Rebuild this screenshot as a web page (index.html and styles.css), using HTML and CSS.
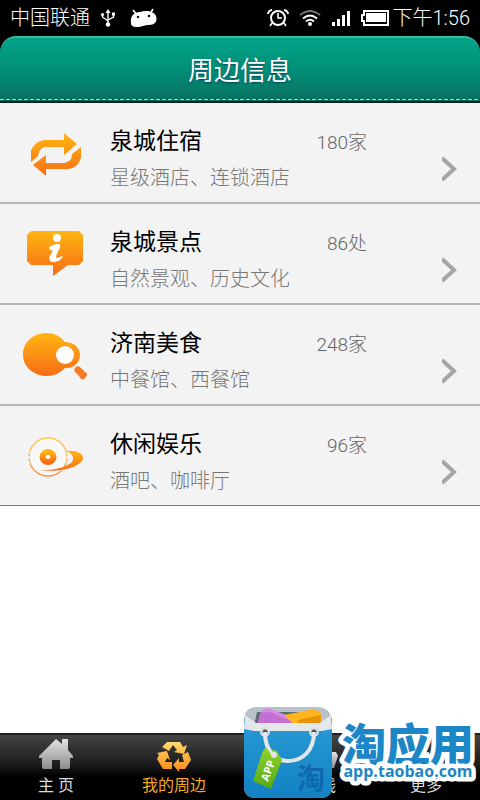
FILE: index.html
```html
<!DOCTYPE html>
<html lang="zh-CN">

<head>
    <meta charset="UTF-8">
    <meta name="viewport" content="width=device-width, initial-scale=1.0">
    <title>周边信息</title>
    <link rel="stylesheet" href="styles.css">
</head>

<body>
    <!-- 渐变 -->
    <svg class="defs" width="0" height="0" aria-hidden="true">
        <defs>
            <linearGradient id="orange" x1="0" y1="0" x2="0" y2="1">
                <stop offset="0" stop-color="#ffb612" />
                <stop offset="1" stop-color="#f86c16" />
            </linearGradient>
            <linearGradient id="arrows" gradientUnits="userSpaceOnUse" x1="0" y1="12" x2="0" y2="56">
                <stop offset="0" stop-color="#ffb612" />
                <stop offset="1" stop-color="#f86c16" />
            </linearGradient>
            <linearGradient id="silver" x1="0" y1="0" x2="0" y2="1">
                <stop offset="0" stop-color="#e2e2e2" />
                <stop offset="1" stop-color="#8c8c8c" />
            </linearGradient>
            <linearGradient id="gold" gradientUnits="userSpaceOnUse" x1="0" y1="2" x2="0" y2="34">
                <stop offset="0" stop-color="#ffe070" />
                <stop offset="1" stop-color="#f98a18" />
            </linearGradient>
            <linearGradient id="blue" x1="0" y1="0" x2="0" y2="1">
                <stop offset="0" stop-color="#299bd5" />
                <stop offset="1" stop-color="#1381c2" />
            </linearGradient>
            <linearGradient id="green" x1="0" y1="0" x2="0" y2="1">
                <stop offset="0" stop-color="#8ed12c" />
                <stop offset="1" stop-color="#57a916" />
            </linearGradient>
        </defs>
    </svg>

    <!-- 状态栏 -->
    <div class="status">
        <span class="carrier">中国联通</span>
        <svg class="usb" width="16" height="18" viewBox="0 0 16 18" fill="none" stroke="#fff" stroke-width="1.4">
            <path d="M8 3V15M2.500 6V8L8 12M13.500 5V8L8 11" />
            <path d="M8 0L10.500 4H5.500Z" fill="#fff" stroke="none" />
            <circle cx="2.500" cy="5.500" r="1.600" fill="#fff" stroke="none" />
            <path d="M12 3.500H15V6.500H12Z" fill="#fff" stroke="none" />
            <circle cx="8" cy="15.500" r="2.200" fill="#fff" stroke="none" />
        </svg>
        <svg class="droid" width="28" height="20" viewBox="0 0 28 20">
            <path d="M3 2L7 7M23 1L20 6" stroke="#fff" stroke-width="1.600" />
            <path d="M1 15C0 8 4 4 10 4C16 2 24 3 26 8C28 14 24 17 19 17C14 17 12 19 7 19C3 19 1 18 1 15Z" fill="#fff" />
            <circle cx="8" cy="9" r="1.200" />
            <circle cx="19" cy="8" r="1.200" />
        </svg>
        <div class="signals">
            <svg width="22" height="18" viewBox="0 0 22 18" fill="none" stroke="#fff" stroke-width="2">
                <circle cx="11" cy="9" r="7" />
                <path d="M11 4V9H15M5 14L3 17M17 14L19 17" stroke-width="1.600" />
                <path d="M1 5C1 3 3 1 5 1M17 1C19 1 21 3 21 5" />
            </svg>
            <svg width="22" height="16" viewBox="0 0 22 16" fill="none" stroke="#fff" stroke-width="2">
                <path d="M1 5Q11 -3 21 5" stroke="#777" />
                <path d="M4 8.500Q11 2.500 18 8.500M7 11.500Q11 8 15 11.500" />
                <circle cx="11" cy="14" r="2" fill="#fff" stroke="none" />
            </svg>
            <svg width="20" height="16" viewBox="0 0 20 16" fill="#fff">
                <path d="M1 12H4V16H1ZM6 9H9V16H6ZM11 5H14V16H11ZM16 1H19V16H16Z" />
            </svg>
            <svg width="28" height="16" viewBox="0 0 28 16">
                <path d="M3 1H27V15H3V11H1V5H3Z" fill="none" stroke="#fff" stroke-width="2" />
                <path d="M5 3H25V12H5Z" fill="#fff" />
            </svg>
            <span>下午1:56</span>
        </div>
    </div>

    <header class="header">
        <h1>周边信息</h1>
    </header>

    <!-- 列表 -->
    <main class="list">
        <a class="row" href="#">
            <svg class="icon" width="80" height="70" viewBox="0 0 80 70" fill="url(#arrows)">
                <path d="M16 41V30Q20 20 29 19H49V12L62 23L49 34V26H30Q24 27 23 35Z" />
                <path d="M66 26V37Q62 48 53 48H31V55L18 44L31 34V42H49Q57 41 57 33Z" />
            </svg>
            <span class="info">
                <span class="name">泉城住宿</span>
                <span class="desc">星级酒店、连锁酒店</span>
            </span>
            <span class="count">180家</span>
            <svg class="arrow" width="16" height="26" viewBox="0 0 16 26"><path d="M0 2L12 13L0 24" fill="none" stroke="#a5a5a5" stroke-width="4" /></svg>
        </a>
        <a class="row" href="#">
            <svg class="icon" width="80" height="70" viewBox="0 0 80 70">
                <path d="M16 9H64L68 13V39L64 43H53L38 54V43H16L12 39V13Z" fill="url(#orange)" />
                <circle cx="42" cy="16" r="4" fill="#fff" />
                <path d="M34 25C39 23 43 20 45 23C46 26 41 32 41 35C42 37 44 35 47 34C49 34 45 40 39 40C32 40 34 34 38 29C36 28 34 28 34 25Z" fill="#fff" />
            </svg>
            <span class="info">
                <span class="name">泉城景点</span>
                <span class="desc">自然景观、历史文化</span>
            </span>
            <span class="count">86处</span>
            <svg class="arrow" width="16" height="26" viewBox="0 0 16 26"><path d="M0 2L12 13L0 24" fill="none" stroke="#a5a5a5" stroke-width="4" /></svg>
        </a>
        <a class="row" href="#">
            <svg class="icon" width="80" height="70" viewBox="0 0 80 70">
                <path d="M32 10C39 10 45 13 50 19C58 19 65 24 65 32C65 40 58 46 50 45C45 50 39 53 32 53C18 53 8 43 8 32C8 19 18 10 32 10Z" fill="url(#orange)" />
                <circle cx="50" cy="32" r="9" fill="#fff" />
                <path d="M63 47L68 52" stroke="#f67a24" stroke-width="7" stroke-linecap="round" />
                <path d="M64 54L71 49L72 52L68 57Z" fill="#f67a24" />
            </svg>
            <span class="info">
                <span class="name">济南美食</span>
                <span class="desc">中餐馆、西餐馆</span>
            </span>
            <span class="count">248家</span>
            <svg class="arrow" width="16" height="26" viewBox="0 0 16 26"><path d="M0 2L12 13L0 24" fill="none" stroke="#a5a5a5" stroke-width="4" /></svg>
        </a>
        <a class="row" href="#">
            <svg class="icon" width="80" height="70" viewBox="0 0 80 70">
                <circle cx="33" cy="33" r="19" fill="#f8f8f8" stroke="url(#orange)" stroke-width="1.500" stroke-opacity=".7" />
                <path d="M13 27V40M53 27V40" stroke="#f3f3f3" stroke-width="3" stroke-dasharray="3 2" />
                <path d="M51 27C62 26 68 30 68 34C67 42 50 48 24 47C42 46 56 42 58 36C59 32 56 29 51 27Z" fill="url(#orange)" />
                <ellipse cx="33" cy="33" rx="5.500" ry="5" fill="#fff" stroke="url(#orange)" stroke-width="6" />
            </svg>
            <span class="info">
                <span class="name">休闲娱乐</span>
                <span class="desc">酒吧、咖啡厅</span>
            </span>
            <span class="count">96家</span>
            <svg class="arrow" width="16" height="26" viewBox="0 0 16 26"><path d="M0 2L12 13L0 24" fill="none" stroke="#a5a5a5" stroke-width="4" /></svg>
        </a>
    </main>

    <!-- 底部导航 -->
    <footer class="bottom">
        <nav class="tabs">
            <a href="#">
                <svg width="36" height="34" viewBox="0 0 36 34" fill="url(#silver)">
                    <path d="M18 1L24 6V1H30V12L35 18V20H32V29Q32 31 30 31H22V22H14V31H6Q4 31 4 29V20H1V18Z" />
                </svg>
                <span>主 页</span>
            </a>
            <a class="active" href="#">
                <svg width="36" height="34" viewBox="0 0 36 34" fill="url(#gold)">
                    <path d="M11 4H24L27 9L31 7L28 16L18 14L21 12L17 7L13 13L6 9Z" />
                    <path d="M1 15L11 13L14 22L11 20L9 24H16V31H7L1 21L3 17Z" />
                    <path d="M26 17L32 14L35 22L29 31H23V34L17 27L23 20V24H28Z" />
                </svg>
                <span>我的周边</span>
            </a>
            <a href="#">
                <svg width="72" height="34" viewBox="0 0 72 34" fill="url(#silver)">
                    <path d="M4 14H68L70 18L66 30H4Z" />
                </svg>
                <span>旅游路线</span>
            </a>
            <a href="#">
                <svg width="36" height="34" viewBox="0 0 36 34" fill="url(#silver)">
                    <path d="M4 14H10V20H4ZM15 14H21V20H15ZM26 14H32V20H26Z" />
                </svg>
                <span>更多</span>
            </a>
        </nav>

        <!-- 淘应用 -->
        <div class="badge">
            <svg class="bag" width="92" height="94" viewBox="0 0 92 94">
                <path d="M14 1H76Q86 1 90 12V80Q90 92 78 92H14Q2 92 2 80V12Q4 1 14 1Z" fill="#b9c2c8" />
                <path d="M15 6H77L80 20H12Z" fill="#596b76" />
                <path d="M20 4L26 2L54 13V20H15Z" fill="#d98ae6" />
                <path d="M18 7L28 6L54 17V20H15Z" fill="#c26ed2" />
                <path d="M42 9L73 3L80 8L78 20H54Z" fill="#ffb51b" />
                <path d="M56 14L79 9L78 20H56Z" fill="#e99108" />
                <path d="M2 12L13 18H79L90 12V80Q90 92 78 92H14Q2 92 2 80Z" fill="url(#blue)" />
                <path d="M3 9L14 17H78L89 9L90 23L80 25H12L2 23Z" fill="#e4e8ea" />
                <text class="stamp" x="55" y="83">淘</text>
                <circle cx="23" cy="26" r="5" fill="#d8dde0" />
                <circle cx="72" cy="26" r="5" fill="#d8dde0" />
                <circle cx="23" cy="26" r="2.500" fill="#43535e" />
                <circle cx="72" cy="26" r="2.500" fill="#43535e" />
                <path d="M23 26C23 44 32 55 46 55C61 55 72 44 72 26" fill="none" stroke="#e3e7ea" stroke-width="4" />
                <path d="M23 42L35 45L40 54L29 83L11 75L20 47Z" fill="url(#green)" />
                <circle cx="32" cy="49" r="3" fill="#e3e7ea" />
                <path d="M23 30Q25 43 32 49" fill="none" stroke="#e3e7ea" stroke-width="3" />
                <text class="tag" transform="translate(26 76) rotate(-70)">APP</text>
            </svg>
            <svg class="brand" width="144" height="76" viewBox="0 0 144 76">
                <text class="brand-name" x="72" y="37">淘应用</text>
                <text class="brand-url" x="72" y="53">app.taobao.com</text>
            </svg>
        </div>
    </footer>
</body>

</html>
```
FILE: styles.css
```css
* {
    box-sizing: border-box;
}

body {
    margin: 0;
    min-height: 100vh;
    display: flex;
    flex-direction: column;
    background: #fff;
    font-family: Roboto, "Noto Sans CJK SC", sans-serif;
    font-weight: 300;
}

a {
    color: inherit;
    text-decoration: none;
}

svg {
    flex: none;
    display: block;
}

.defs {
    position: absolute;
}

.status {
    display: flex;
    align-items: center;
    height: 36px;
    padding: 0 10px;
    background: #000;
    color: #fff;
    font-size: 20px;
    line-height: 36px;
    white-space: nowrap;
}

.usb {
    margin-left: 10px;
}

.droid {
    margin-left: 14px;
}

.signals {
    display: flex;
    align-items: center;
    gap: 10px;
    margin-left: auto;
}

.signals span {
    margin-left: -6px;
}

.header {
    background: #000;
}

.header h1 {
    margin: 0;
    height: 67px;
    border-top: 2px solid #35b89c;
    border-bottom: 2px solid #04231d;
    border-radius: 16px 16px 0 0;
    background:
        repeating-linear-gradient(90deg, #b9cfa8 0 4px, #0a5446 4px 6px) 0 61px / 100% 1px no-repeat,
        linear-gradient(#00a489, #028f78 50%, #08705f);
    color: #fff;
    font-size: 26px;
    font-weight: 400;
    line-height: 66px;
    text-align: center;
    text-shadow: 0 1px 2px #045;
}

.row {
    display: flex;
    height: 101px;
    padding: 0 22px 0 15px;
    background: #f3f3f3;
    border-bottom: 2px solid #b5b5b5;
}

.row:last-child {
    height: 100px;
    border-bottom: 1px solid #777;
}

.icon {
    margin-top: 18px;
}

.info {
    flex: 1;
    padding: 21px 0 0 15px;
    white-space: nowrap;
}

.name,
.desc {
    display: block;
}

.name {
    color: #000;
    font-size: 23px;
    font-weight: 400;
    line-height: 36px;
}

.desc {
    color: #777;
    font-size: 20px;
    line-height: 36px;
}

.count {
    padding-top: 22px;
    color: #666;
    font-size: 19px;
    line-height: 36px;
}

.arrow {
    margin: 53px 0 0 75px;
}

.bottom {
    position: relative;
    margin-top: auto;
}

.tabs {
    display: grid;
    grid-template-columns: 28fr 31fr 34fr 27fr;
    height: 67px;
    padding-top: 3px;
    border-top: 2px solid #222;
    background: linear-gradient(#444, #1c1c1c 45%, #000 65%);
    color: #ddd;
    font-size: 16px;
    font-weight: 400;
    line-height: 28px;
}

.tabs a {
    display: flex;
    flex-direction: column;
    align-items: center;
    white-space: pre;
}

.tabs .active {
    color: #f5a623;
}

.badge {
    position: absolute;
    right: 0;
    bottom: 0;
    display: flex;
    align-items: flex-end;
    gap: 2px;
}

.brand {
    overflow: visible;
    fill: #1c86c6;
    stroke: #fff;
    stroke-width: 9px;
    stroke-linejoin: round;
    paint-order: stroke fill;
    text-anchor: middle;
}

.brand-name {
    font-size: 44px;
    font-weight: 900;
}

.brand-url {
    font-family: "Open Sans", sans-serif;
    font-size: 16px;
    font-weight: 700;
}

.stamp {
    fill: #0e69ac;
    font-size: 28px;
    font-weight: 700;
}

.tag {
    fill: #fff;
    font-family: "Open Sans", sans-serif;
    font-size: 11px;
    font-weight: 700;
}
```
